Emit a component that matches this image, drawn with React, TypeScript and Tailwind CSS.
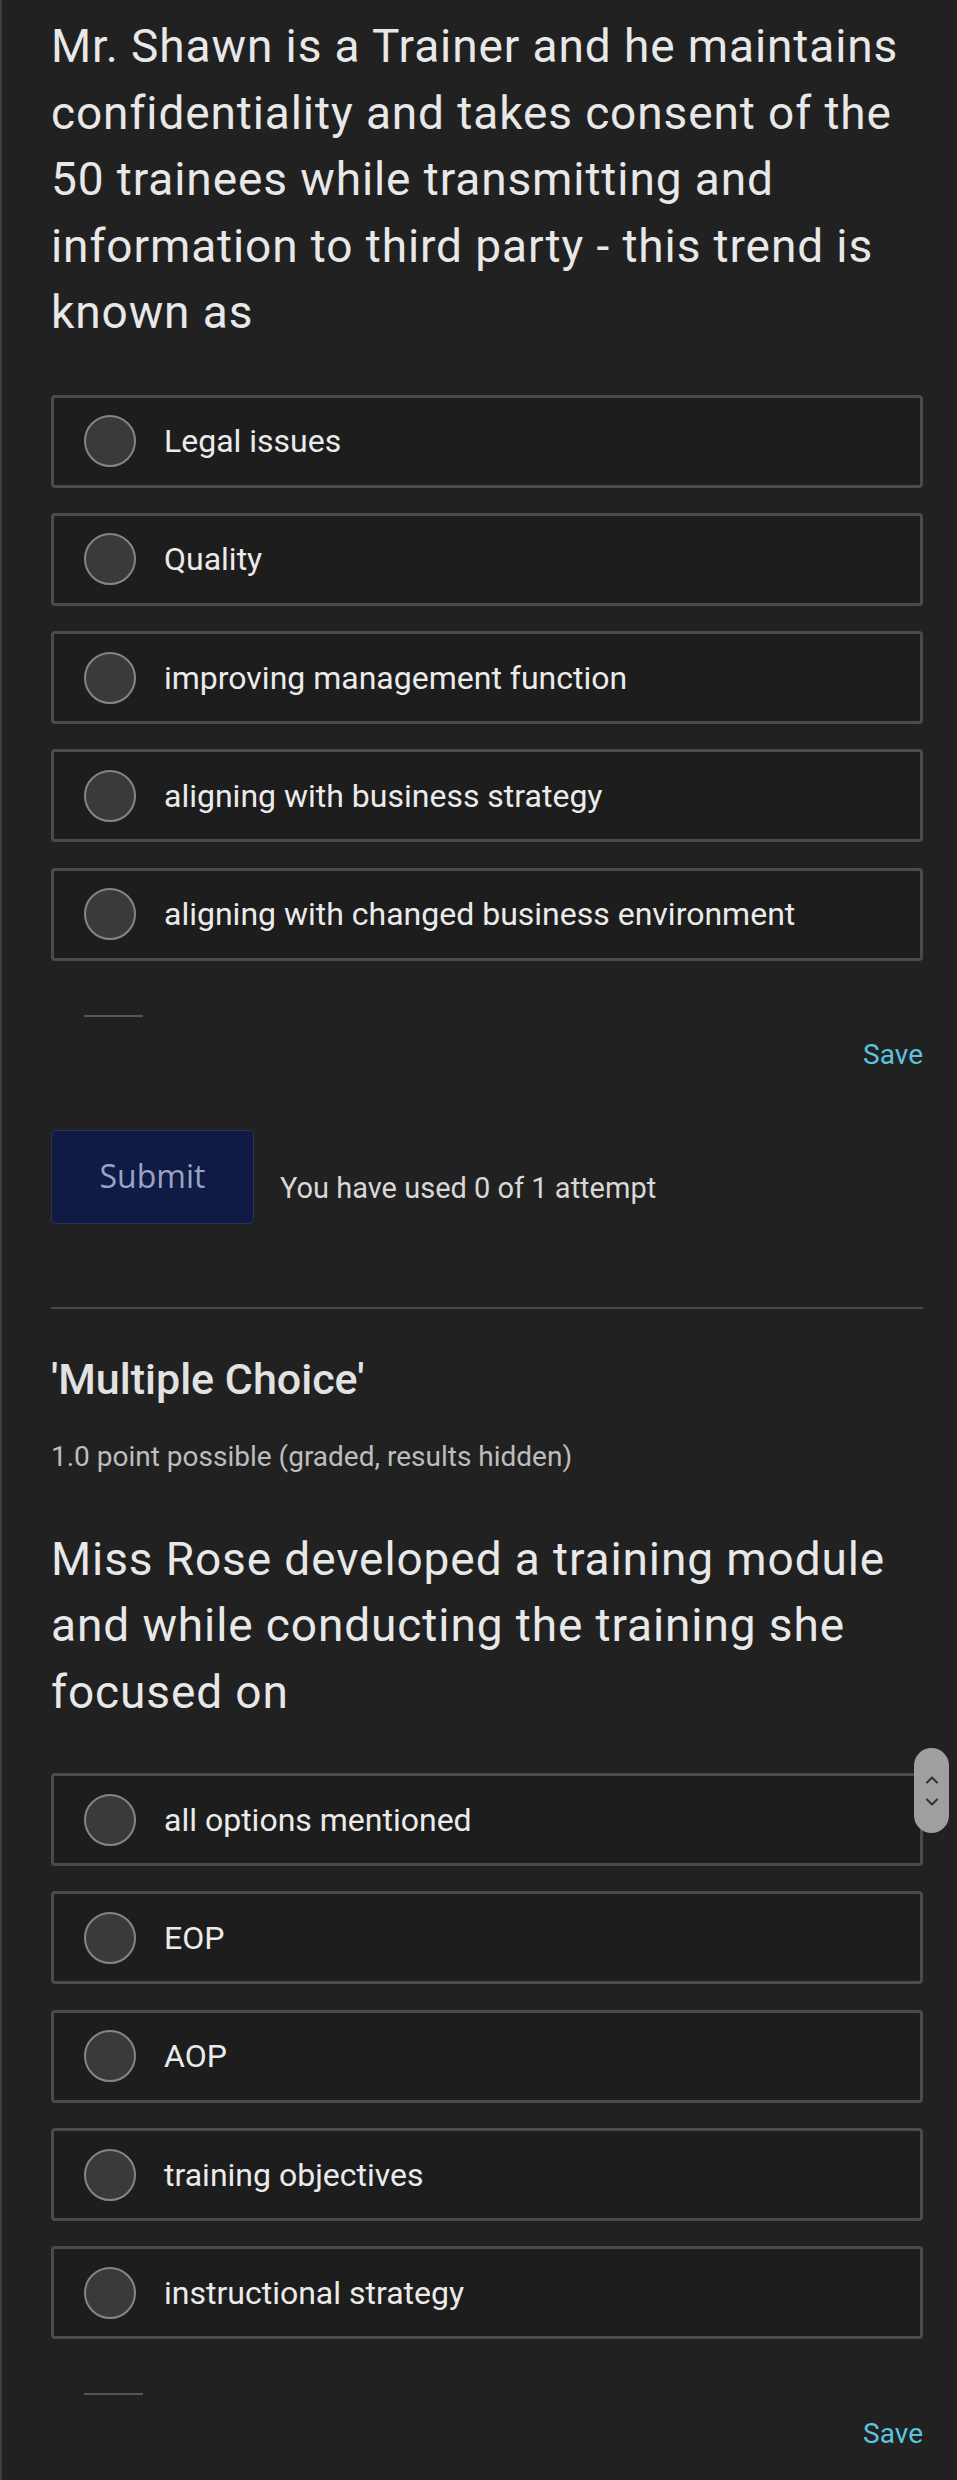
import React from "react";

const roboto = { fontFamily: "Roboto, 'Liberation Sans', sans-serif" };

function Option({ label }: { label: string }) {
  return (
    <div className="flex h-[93px] items-center rounded-[4px] border-[3px] border-[#4b4b4b] bg-[#1d1d1d] pl-[30px]">
      <span className="h-[52px] w-[52px] shrink-0 rounded-full border-2 border-[#858585] bg-[#3a3a3a]" />
      <span className="ml-[28px] text-[32px] leading-[38px] text-[#ebebeb]">{label}</span>
    </div>
  );
}

function Options({ items }: { items: string[] }) {
  return (
    <div className="flex flex-col gap-[25.3px]">
      {items.map((t) => (
        <Option key={t} label={t} />
      ))}
    </div>
  );
}

export default function App() {
  return (
    <div
      className="relative min-h-[2480px] w-[957px] border-l-2 border-[#3e3e3e] bg-[#212121] pl-[49px] pr-[34px] pt-[13px]"
      style={roboto}
    >
      <p className="text-[46px] leading-[66.5px] tracking-[0.9px] text-[#e8e8e8]">
        Mr. Shawn is a Trainer and he maintains confidentiality and takes consent of the 50 trainees while
        transmitting and information to third party - this trend is known as
      </p>

      <div className="mt-[49px]">
        <Options
          items={[
            "Legal issues",
            "Quality",
            "improving management function",
            "aligning with business strategy",
            "aligning with changed business environment",
          ]}
        />
      </div>

      <div className="ml-[33px] mt-[54px] h-[2px] w-[59px] bg-[#555555]" />

      <div className="mt-[22px] flex justify-end">
        <span className="text-[28px] leading-[32px] text-[#5cc3de]">Save</span>
      </div>

      <div className="mt-[59px] flex items-start">
        <button
          className="flex h-[94px] w-[203px] items-center justify-center rounded-[5px] border border-[#2c3355] bg-[#0f1a45] pb-[2px] text-[32px] text-[#9aa3c2]"
          style={{ fontFamily: "'Open Sans', 'Noto Sans', sans-serif" }}
        >
          Submit
        </button>
        <span className="ml-[26px] mt-[41px] text-[29px] leading-[34px] text-[#d8d8d8]">
          You have used 0 of 1 attempt
        </span>
      </div>

      <div className="mt-[83px] h-[2px] w-full bg-[#4a4a4a]" />

      <h3 className="mt-[45px] text-[43px] font-medium leading-[50px] text-[#e2e2e2]">'Multiple Choice'</h3>

      <p className="mt-[37px] text-[28px] leading-[32px] text-[#bdbdbd]">
        1.0 point possible (graded, results hidden)
      </p>

      <p className="mt-[53px] text-[46px] leading-[66.5px] tracking-[0.9px] text-[#e8e8e8]">
        Miss Rose developed a training module and while conducting the training she focused on
      </p>

      <div className="mt-[48px]">
        <Options
          items={["all options mentioned", "EOP", "AOP", "training objectives", "instructional strategy"]}
        />
      </div>

      <div className="ml-[33px] mt-[54px] h-[2px] w-[59px] bg-[#555555]" />

      <div className="mt-[23px] flex justify-end">
        <span className="text-[28px] leading-[32px] text-[#5cc3de]">Save</span>
      </div>

      <div className="absolute left-[912px] top-[1748px] flex h-[85px] w-[35px] flex-col items-center justify-center gap-[14px] rounded-full bg-[#9f9f9f]">
        <svg width="14" height="9" viewBox="0 0 14 9" fill="none">
          <path d="M2 7.5L7 2.5L12 7.5" stroke="#333" strokeWidth="2" strokeLinecap="round" strokeLinejoin="round" />
        </svg>
        <svg width="14" height="9" viewBox="0 0 14 9" fill="none">
          <path d="M2 1.5L7 6.5L12 1.5" stroke="#333" strokeWidth="2" strokeLinecap="round" strokeLinejoin="round" />
        </svg>
      </div>
    </div>
  );
}
